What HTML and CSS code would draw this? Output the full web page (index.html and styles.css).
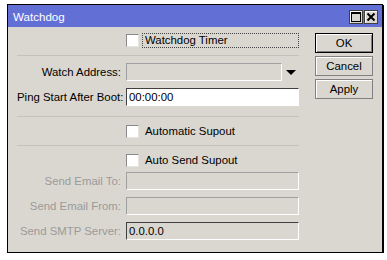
FILE: index.html
```html
<!DOCTYPE html>
<html>
<head>
<meta charset="utf-8">
<link rel="stylesheet" href="styles.css">
</head>
<body>
<div class="window">
  <div class="titlebar">
    <span class="title">Watchdog</span>
    <div class="tb-buttons">
      <span class="tb-btn"><svg width="10" height="10" viewBox="0 0 10 10"><rect x="0.5" y="0.5" width="9" height="9" fill="none" stroke="#000"/><rect x="0" y="0" width="10" height="2" fill="#000"/></svg></span>
      <span class="tb-btn"><svg width="10" height="10" viewBox="0 0 10 10"><path d="M1.5 1.5 L8.5 8.5 M8.5 1.5 L1.5 8.5" stroke="#000" stroke-width="2"/></svg></span>
    </div>
  </div>
  <div class="body">
    <div class="form">
      <div class="row cb-row first">
        <span class="lbl"></span>
        <div class="cb"><span class="box"></span><span class="cb-text focus">Watchdog Timer</span></div>
      </div>
      <div class="sep sep1"></div>
      <div class="row field-row r-watch">
        <span class="lbl">Watch Address:</span>
        <div class="field-combo"><span class="input disabled"></span><span class="arrow"></span></div>
      </div>
      <div class="row field-row">
        <span class="lbl">Ping Start After Boot:</span>
        <span class="input active">00:00:00</span>
      </div>
      <div class="sep sep2"></div>
      <div class="row cb-row r-auto">
        <span class="lbl"></span>
        <div class="cb"><span class="box"></span><span class="cb-text">Automatic Supout</span></div>
      </div>
      <div class="sep sep3"></div>
      <div class="row cb-row r-send">
        <span class="lbl"></span>
        <div class="cb"><span class="box"></span><span class="cb-text">Auto Send Supout</span></div>
      </div>
      <div class="row field-row r-email">
        <span class="lbl dim">Send Email To:</span>
        <span class="input disabled"></span>
      </div>
      <div class="row field-row">
        <span class="lbl dim">Send Email From:</span>
        <span class="input disabled"></span>
      </div>
      <div class="row field-row">
        <span class="lbl dim">Send SMTP Server:</span>
        <span class="input disabled filled">0.0.0.0</span>
      </div>
    </div>
    <div class="buttons">
      <div class="btn default">OK</div>
      <div class="btn">Cancel</div>
      <div class="btn">Apply</div>
    </div>
  </div>
</div>
</body>
</html>
```

FILE: styles.css
```css
html, body {
  margin: 0;
  padding: 0;
  background: #ffffff;
}
body {
  font-family: "Liberation Sans", Arial, sans-serif;
  font-size: 11.4px;
  color: #000;
}
.window {
  margin: 4px 0 0 7px;
  width: 374px;
  border: 1px solid #000;
  box-shadow: 1px 1px 0 #000;
  background: #dad7d0;
}
.titlebar {
  height: 22px;
  background: #6270d6;
  display: flex;
  align-items: center;
  justify-content: space-between;
  padding: 0 4px 0 5px;
}
.title {
  color: #fff;
  font-size: 11.6px;
  margin-top: 1px;
}
.tb-buttons {
  display: flex;
  gap: 1px;
  margin-top: 2px;
}
.tb-btn {
  width: 12px;
  height: 12px;
  background: #dad7d0;
  border: 1px solid #404040;
  box-shadow: inset 1px 1px 0 #fff;
  display: flex;
  align-items: center;
  justify-content: center;
}
.body {
  height: 225px;
  display: flex;
  align-items: flex-start;
}
.form {
  padding-left: 9px;
  width: 282px;
  display: flex;
  flex-direction: column;
}
.row {
  display: grid;
  grid-template-columns: 104px 173px;
  column-gap: 5px;
  align-items: center;
}
.cb-row { height: 15px; }
.field-row { height: 18px; margin-top: 7px; }
.first { margin-top: 6px; }
.r-auto, .r-send { margin-top: 7px; }
.r-email { margin-top: 4px; }
.sep {
  height: 1px;
  background: #c5c2bb;
}
.sep1 { margin-top: 7px; }
.sep2 { margin-top: 10px; }
.sep3 { margin-top: 6px; }
.lbl {
  text-align: right;
  white-space: nowrap;
}
.lbl.dim { color: #9a9a9a; }
.cb {
  display: flex;
  align-items: center;
  height: 15px;
}
.box {
  width: 11px;
  height: 11px;
  background: #fff;
  border-top: 1px solid #8a8a8a;
  border-left: 1px solid #8a8a8a;
  border-bottom: 1px solid #e6e4df;
  border-right: 1px solid #e6e4df;
  flex: none;
}
.cb-text {
  margin-left: 3px;
  padding-left: 2px;
  height: 13px;
  line-height: 13px;
  border: 1px dotted transparent;
  flex: 1;
}
.cb-text.focus { border-color: #444; }
.input {
  box-sizing: border-box;
  height: 18px;
  line-height: 16px;
  padding-left: 2px;
  border-top: 1px solid #7a7a7a;
  border-left: 1px solid #7a7a7a;
  border-bottom: 1px solid #fff;
  border-right: 1px solid #fff;
}
.input.active {
  background: #fff;
  border-top-color: #404040;
  border-left-color: #404040;
}
.input.disabled {
  background: transparent;
  border-top-color: #a0a0a0;
  border-left-color: #a0a0a0;
}
.input.filled {
  border-top-color: #404040;
  border-left-color: #404040;
}
.field-combo {
  display: flex;
  align-items: center;
}
.field-combo .input { width: 156px; }
.arrow {
  margin-left: 4px;
  width: 0;
  height: 0;
  border-left: 5px solid transparent;
  border-right: 5px solid transparent;
  border-top: 5px solid #000;
  margin-top: 1px;
}
.buttons {
  margin-left: 16px;
  padding-top: 6px;
  display: flex;
  flex-direction: column;
  gap: 3px;
}
.btn {
  box-sizing: border-box;
  width: 58px;
  height: 20px;
  line-height: 18px;
  text-align: center;
  border: 1px solid #808080;
  box-shadow: inset 1px 1px 0 #fff;
}
.btn.default {
  border-color: #000;
  box-shadow: inset 1px 1px 0 #fff, inset -1px -1px 0 #808080;
}
```
